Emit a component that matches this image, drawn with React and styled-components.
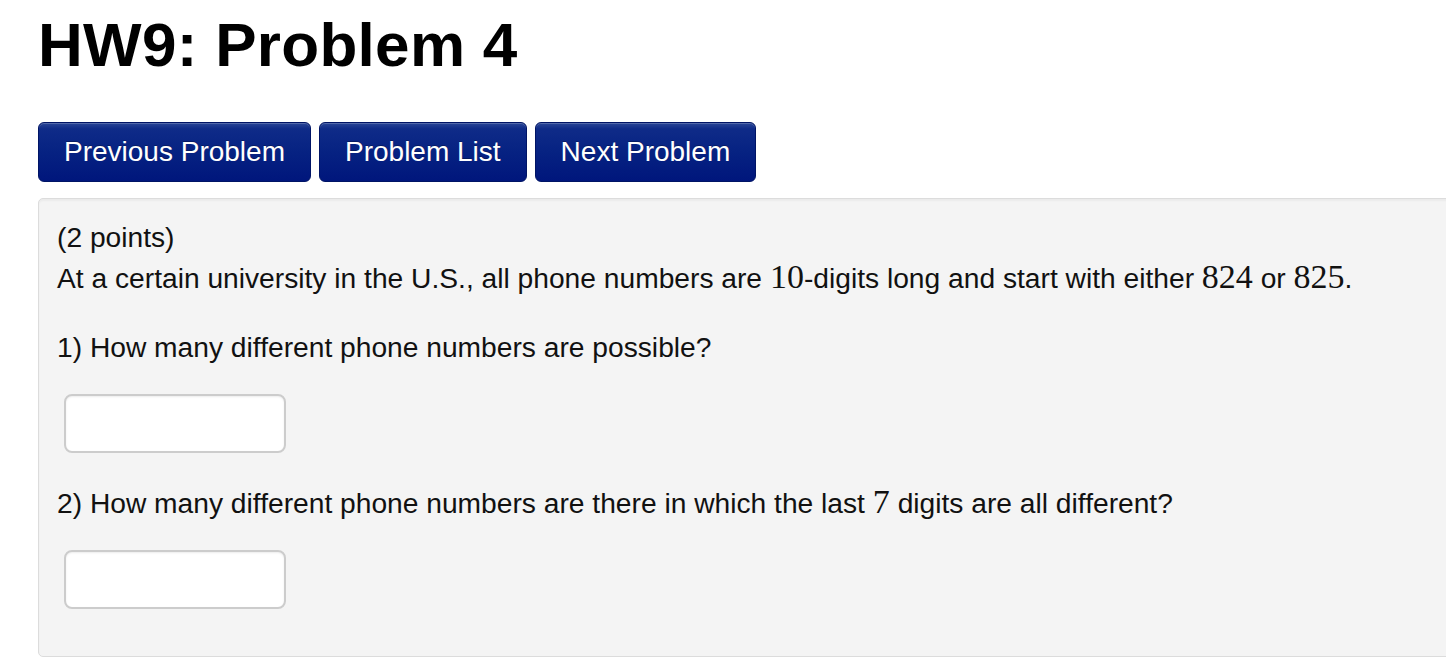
import React from 'react';
import styled, { createGlobalStyle } from 'styled-components';

const GlobalStyle = createGlobalStyle`
 html, body {
   margin: 0;
   padding: 0;
   background: #fff;
   overflow: hidden;
 }
 body {
   font-family: "Liberation Sans", Arial, Helvetica, sans-serif;
   color: #111;
 }
`

function App() {
    return (
        <Page>
            <GlobalStyle />
            <Title>HW9: Problem 4</Title>
            <Nav>
                <NavButton>Previous Problem</NavButton>
                <NavButton>Problem List</NavButton>
                <NavButton>Next Problem</NavButton>
            </Nav>
            <Panel>
                <Line>(2 points)</Line>
                <Line>
                    At a certain university in the U.S., all phone numbers are <M>10</M>-digits long and start with either <M>824</M> or <M>825</M>.
                </Line>
                <Question>1) How many different phone numbers are possible?</Question>
                <Answer type="text" />
                <Question>2) How many different phone numbers are there in which the last <M>7</M> digits are all different?</Question>
                <Answer type="text" />
            </Panel>
        </Page>
    )
}

const Page = styled.div`
 padding: 10px 0 0 38px;
`

const Title = styled.h1`
 margin: 0;
 font-size: 62px;
 line-height: 70px;
 font-weight: 700;
 color: #000;
 letter-spacing: 0.3px;
`

const Nav = styled.div`
 display: flex;
 gap: 8px;
 margin-top: 42px;
`

const NavButton = styled.button`
 height: 60px;
 padding: 0 25px;
 font-family: "Liberation Sans", Arial, sans-serif;
 font-size: 28px;
 color: #fff;
 border: 1px solid #001465;
 border-radius: 6px;
 background: linear-gradient(to bottom, #2a4696 0%, #0f2b88 10%, #062282 50%, #00167c 100%);
 box-shadow: inset 0 1px 0 rgba(255, 255, 255, 0.2);
 text-shadow: 0 -1px 0 rgba(0, 0, 0, 0.25);
 cursor: pointer;
`

const Panel = styled.div`
 margin-top: 16px;
 width: 1440px;
 box-sizing: border-box;
 padding: 18px 18px 47px 18px;
 background: #f4f4f4;
 border: 1px solid #dcdcdc;
 border-radius: 5px;
 box-shadow: inset 0 2px 2px rgba(0, 0, 0, 0.04);
 font-size: 28.2px;
 line-height: 40px;
 color: #111;
`

const Line = styled.div``

const Question = styled.div`
 margin-top: 29px;

 & + input {
   margin-top: 27px;
 }
`

const M = styled.span`
 font-family: "Liberation Serif", "Times New Roman", serif;
 font-size: 34px;
`

const Answer = styled.input`
 display: block;
 width: 222px;
 height: 59px;
 box-sizing: border-box;
 margin-left: 7px;
 border: 2px solid #cccccc;
 border-radius: 8px;
 background: #fff;
 box-shadow: inset 0 1px 2px rgba(0, 0, 0, 0.08);
 outline: none;
`

export default App
